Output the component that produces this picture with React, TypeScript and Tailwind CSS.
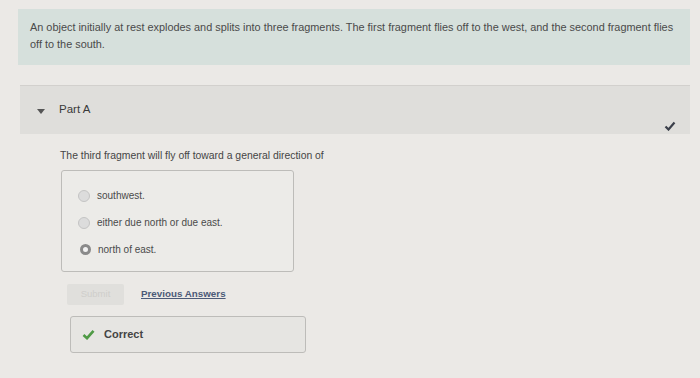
import React from "react";

export default function App() {
  return (
    <div
      className="w-[700px] h-[378px] overflow-hidden bg-[#ebe9e6] text-[#3f3f3f]"
      style={{ fontFamily: '"Liberation Sans", Arial, sans-serif' }}
    >
      <div className="pt-[9px] pl-[18px] pr-[10px]">
        <div className="bg-[#d6e0dc] px-[12px] pt-[10px] pb-[10px] text-[10.9px] leading-[17px] text-[#4a4a4a] h-[56px]">
          An object initially at rest explodes and splits into three fragments. The first fragment flies off to the west, and the second fragment flies off to the south.
        </div>
      </div>

      <div className="mt-[20px] ml-[20px] mr-[10px] border-t border-[#d2d0cd]">
        <div className="h-[48px] bg-[#dfdedb] flex items-center relative">
          <svg width="10" height="8" viewBox="0 0 10 8" className="ml-[16px] mt-[2px]">
            <path d="M1 2 L9 2 L5 7 Z" fill="#555" />
          </svg>
          <span className="ml-[13px] text-[11.5px] text-[#3a3a3a] font-medium">Part A</span>
          <svg width="12" height="10" viewBox="0 0 12 10" className="absolute right-[14px] top-[35px]">
            <path d="M1.5 5.5 L4.5 8.5 L10.5 1.5" stroke="#3b3f4a" strokeWidth="2.2" fill="none" />
          </svg>
        </div>
      </div>

      <div className="ml-[60px] mt-[14px] text-[10.4px] text-[#454545]">
        The third fragment will fly off toward a general direction of
      </div>

      <div className="ml-[61px] mt-[6px] w-[233px] h-[102px] border border-[#bdbcb9] rounded-[3px] bg-[#ecebe8] pt-[17px] pl-[16px] flex flex-col gap-[11px]">
        {[
          { t: "southwest.", sel: false },
          { t: "either due north or due east.", sel: false },
          { t: "north of east.", sel: true },
        ].map((o) => (
          <div key={o.t} className="flex items-center h-[16px]">
            {o.sel ? (
              <span className="w-[11px] h-[11px] ml-[2px] rounded-full border-[3px] border-[#8a8a8a] bg-[#f2f2f2]" />
            ) : (
              <span className="w-[12px] h-[12px] rounded-full border border-[#c4c4c4] bg-[#dcdcdc]" />
            )}
            <span className="ml-[7px] text-[10px] text-[#4a4a4a]">{o.t}</span>
          </div>
        ))}
      </div>

      <div className="ml-[67px] mt-[12px] flex items-center">
        <div className="w-[57px] h-[21px] bg-[#e0dfdc] rounded-[2px] flex items-center justify-center text-[9.5px] text-[#cfcecb]">
          Submit
        </div>
        <span className="ml-[17px] text-[9.8px] font-bold text-[#4b5a78] underline">Previous Answers</span>
      </div>

      <div className="ml-[70px] mt-[11px] w-[236px] h-[37px] border border-[#bdbcb9] rounded-[3px] bg-[#e6e5e2] flex items-center">
        <svg width="13" height="11" viewBox="0 0 13 11" className="ml-[11px]">
          <path d="M1.5 6 L5 9.2 L11.5 1.8" stroke="#4f9a45" strokeWidth="2.6" fill="none" />
        </svg>
        <span className="ml-[9px] text-[11px] font-bold text-[#444]">Correct</span>
      </div>
    </div>
  );
}
